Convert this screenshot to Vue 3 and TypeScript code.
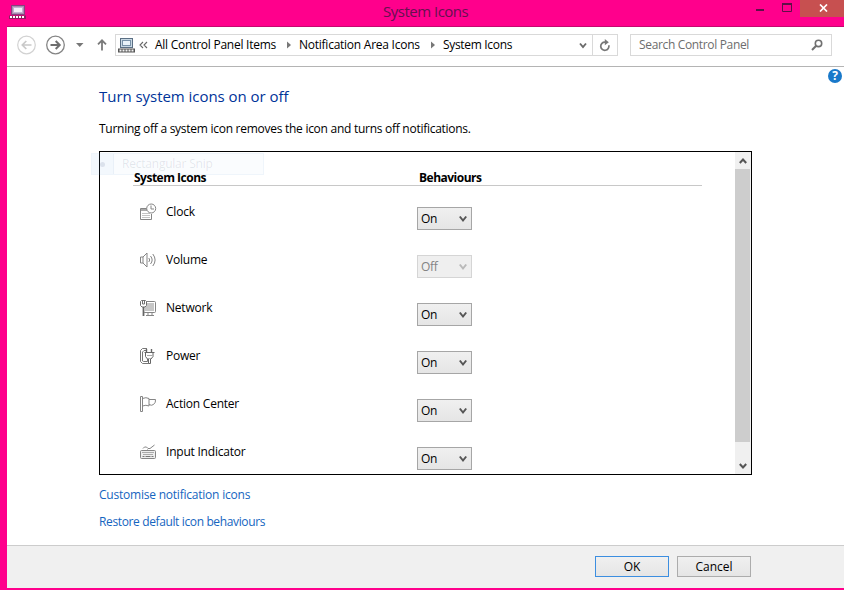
<script setup lang="ts">
import { ref } from 'vue'

type IconName = 'clock' | 'volume' | 'network' | 'power' | 'flag' | 'keyboard'

interface SystemIcon {
  name: string
  icon: IconName
  state: 'On' | 'Off'
  disabled?: boolean
}

const items = ref<SystemIcon[]>([
  { name: 'Clock', icon: 'clock', state: 'On' },
  { name: 'Volume', icon: 'volume', state: 'Off', disabled: true },
  { name: 'Network', icon: 'network', state: 'On' },
  { name: 'Power', icon: 'power', state: 'On' },
  { name: 'Action Center', icon: 'flag', state: 'On' },
  { name: 'Input Indicator', icon: 'keyboard', state: 'On' },
])
</script>

<template>
  <div class="window">
    <header class="titlebar">
      <svg class="app-icon" width="17" height="15" viewBox="0 0 17 15">
        <rect x="2.5" y=".5" width="13" height="9" fill="#a98bb0" stroke="#8a3f80" />
        <rect x="4.5" y="2.5" width="9" height="5" fill="#f4f0f8" stroke="#c3b2d2" />
        <path d="M0 10.500h17v3.500H0z" fill="#8d2060" />
        <path d="M1 12h15" stroke="#fff" stroke-width="2" stroke-dasharray="2 1" />
      </svg>
      <h1 class="title"><span>System Icons</span></h1>
      <div class="controls">
        <svg class="minmax" width="50" height="17" viewBox="0 0 50 17">
          <path d="M6 10h8" stroke="#5e1048" stroke-width="2" />
          <path d="M32.500 3v8.500h9V3" stroke="#5e1048" fill="none" />
          <path d="M32 4h10" stroke="#5e1048" stroke-width="2" />
        </svg>
        <button class="close" aria-label="Close">
          <svg width="9" height="8" viewBox="0 0 9 8"><path d="M1 .5l7 7M8 .5l-7 7" stroke="#fff" stroke-width="1.700" /></svg>
        </button>
      </div>
    </header>

    <nav class="navbar">
      <svg class="nav-icons" width="92" height="22" viewBox="0 0 92 22">
        <g fill="none">
          <circle cx="9.500" cy="11" r="8.800" stroke="#d2d2d2" stroke-width="1.200" />
          <path d="M14.500 11H5.500M9.300 7l-4 4 4 4" stroke="#c9c9c9" stroke-width="1.700" />
          <circle cx="38.500" cy="11" r="8.800" stroke="#858585" stroke-width="1.300" />
          <path d="M33.500 11h9M38.700 7l4 4-4 4" stroke="#6e6e6e" stroke-width="2" />
          <path d="M85 16.500V6.500M81 10.300l4-4 4 4" stroke="#7a7a7a" stroke-width="1.800" />
        </g>
        <path d="M59 9h7.500l-3.750 4z" fill="#777" />
      </svg>
      <div class="address">
        <svg class="path-icon" width="17" height="15" viewBox="0 0 17 15">
          <rect x="2.500" y=".5" width="12" height="9" fill="#c8d8e4" stroke="#5b6f84" />
          <rect x="4.500" y="2.500" width="8" height="5" fill="#e9f3fa" stroke="#7891a8" />
          <path d="M0 10.500h17v4H0z" fill="#555" />
          <path d="M1.500 12.500h14" stroke="#f4f4f4" stroke-width="2" stroke-dasharray="2 1" />
        </svg>
        <svg class="chev2" width="9" height="8" viewBox="0 0 9 8"><path d="M4 1L1 4l3 3M8 1L5 4l3 3" fill="none" stroke="#666" stroke-width="1.100" /></svg>
        <span class="crumb c1">All Control Panel Items</span>
        <svg class="tri" width="4" height="8" viewBox="0 0 4 8"><path d="M0 .5L4 4 0 7.500z" fill="#777" /></svg>
        <span class="crumb c2">Notification Area Icons</span>
        <svg class="tri" width="4" height="8" viewBox="0 0 4 8"><path d="M0 .5L4 4 0 7.500z" fill="#777" /></svg>
        <span class="crumb c3">System Icons</span>
        <svg class="drop" width="8" height="7" viewBox="0 0 8 7"><path d="M1 1.500l3 3.500 3-3.500" fill="none" stroke="#6b6b6b" stroke-width="1.900" /></svg>
        <button class="refresh" aria-label="Refresh">
          <svg width="12" height="13" viewBox="0 0 12 13">
            <path d="M9.800 6.200A4.100 4.100 0 1 1 6 3.100h1" fill="none" stroke="#777" stroke-width="1.700" />
            <path d="M5.800 0l4 3.200-4 3z" fill="#777" />
          </svg>
        </button>
      </div>
      <div class="search">
        <span>Search Control Panel</span>
        <svg width="12" height="12" viewBox="0 0 12 12">
          <circle cx="7.500" cy="4.400" r="3.200" fill="none" stroke="#707070" stroke-width="1.600" />
          <path d="M5.200 6.800L1 11" stroke="#707070" stroke-width="2" />
        </svg>
      </div>
    </nav>

    <main class="content">
      <span class="help">?</span>
      <h2><span>Turn system icons on or off</span></h2>
      <p class="intro"><span>Turning off a system icon removes the icon and turns off notifications.</span></p>

      <section class="listbox">
        <div class="list">
          <div class="head">
            <span class="h-name">System Icons</span>
            <span class="h-beh">Behaviours</span>
          </div>
          <div v-for="item in items" :key="item.name" class="row">
            <svg class="glyph" width="18" height="18" viewBox="0 0 18 18" fill="none" stroke="#858585">
              <template v-if="item.icon === 'clock'">
                <path d="M9 5.500H1.500v11h11V11" />
                <path d="M2 7h6" stroke="#aaa" stroke-width="2" />
                <path d="M3.500 10.500h8M3.500 12.500h8M3.500 14.500h8" stroke="#888" stroke-dasharray="1 1" />
                <circle cx="12.200" cy="5.500" r="4.500" fill="#fff" />
                <path d="M12 2.500v3.500h3" />
              </template>
              <template v-else-if="item.icon === 'volume'">
                <path d="M1.500 6v6h2.500l4 4V2L4 6zM4 6v6" />
                <path d="M9.800 7q1.800 2 0 4M11.500 5q3.300 4 0 8M13.800 3q4.600 6 0 12" />
              </template>
              <template v-else-if="item.icon === 'network'">
                <rect x="4.500" y="2.500" width="12" height="11" rx="1" fill="#fff" />
                <rect x="6" y="4" width="9" height="8" fill="#c6c6c6" stroke="none" />
                <path d="M7 16.500h8M9 14v2M13 14v2" />
                <path d="M1.500 2.500l1-1h4l1 1v4l-1.500 1.500H3L1.500 6.500z" fill="#fff" stroke="#707070" />
                <path d="M3.500 2v3h2V2" stroke="#707070" />
                <path d="M4.500 8v9" stroke="#666" stroke-width="1.800" />
              </template>
              <template v-else-if="item.icon === 'power'">
                <path d="M8 1.500H3.500l-2 2v11l2 2H9.500l1-1M8 3.500H5L3.500 5v9l1 .5h4V12" stroke="#777" />
                <path d="M7.500 2v4M12.500 2v4" stroke="#666" stroke-width="1.400" />
                <path d="M5.500 5.500h10M6.500 6v3.500l2 2.500h3.500l2-2.500V6" fill="#fff" stroke="#666" />
                <path d="M9.500 12v4.500h2V12" fill="#fff" stroke="#666" />
                <path d="M8 8.500h5" stroke="#aaa" />
              </template>
              <template v-else-if="item.icon === 'flag'">
                <path d="M1.500 1.500h2v15h-2z" />
                <path d="M3.500 3.500q3.500-1.600 6.500 0v7.500q-3-1.500-6.500 0M10 4.500h6.500q.5 3-2 5-2 1.500-4.500 0" />
              </template>
              <template v-else>
                <path d="M4 5.500l1.500-1.500h2L9 5.500h2L15.500 2M8.500 6.500v1" />
                <rect x="1.500" y="7.500" width="15" height="8" rx="1" fill="#eee" />
                <path d="M3.500 9.500h11M4.500 11.500h10" stroke="#666" stroke-dasharray="1 1" />
                <path d="M3.500 13.500h2M6.500 13.500h5M12.500 13.500h2" stroke="#777" />
              </template>
            </svg>
            <span class="label">{{ item.name }}</span>
            <button class="select" :class="{ off: item.disabled }" :disabled="item.disabled">
              <span>{{ item.state }}</span>
              <svg width="8" height="8" viewBox="0 0 8 8"><path d="M.8 1.500L4 5.500l3.200-4" fill="none" stroke="currentColor" stroke-width="2" /></svg>
            </button>
          </div>
        </div>
        <div class="scrollbar">
          <svg class="arrow" width="8" height="6" viewBox="0 0 8 6"><path d="M.8 5L4 1.500 7.200 5" fill="none" stroke="#555" stroke-width="2" /></svg>
          <div class="thumb"></div>
          <svg class="arrow down" width="8" height="6" viewBox="0 0 8 6"><path d="M.8 1L4 4.500 7.200 1" fill="none" stroke="#555" stroke-width="2" /></svg>
        </div>
        <div class="ghost"><i><b></b></i><span>Rectangular Snip</span></div>
      </section>

      <a class="link l1"><span>Customise notification icons</span></a>
      <a class="link l2"><span>Restore default icon behaviours</span></a>
    </main>

    <footer class="footer">
      <button class="btn primary">OK</button>
      <button class="btn">Cancel</button>
    </footer>
  </div>
</template>

<style>
body {
  margin: 0;
  overflow: hidden;
}
</style>

<style scoped>
* {
  box-sizing: border-box;
}
.window {
  width: 844px;
  height: 590px;
  padding: 0 0 2px 7px;
  background: #ff008c;
  display: flex;
  flex-direction: column;
  font: 12px/16px 'Open Sans', 'Noto Sans', sans-serif;
  color: #000;
  white-space: nowrap;
}
h1, h2, p {
  margin: 0;
  font-weight: 400;
}
button {
  font: inherit;
  color: inherit;
  padding: 0;
  margin: 0;
  border: 0;
  border-radius: 0;
}
svg {
  display: block;
  flex: none;
}
.titlebar {
  height: 27px;
  display: flex;
  flex: none;
  border-bottom: 1px solid #c4086f;
}
.app-icon {
  margin: 5px 0 0 2px;
}
.title {
  flex: 1;
  padding-left: 357px;
  font-size: 15px;
  line-height: 23px;
  letter-spacing: -0.5px;
  color: #66104f;
}
.controls {
  display: flex;
}
.close {
  width: 44px;
  height: 17px;
  padding-right: 0;
  background: #c75050;
  display: flex;
  justify-content: center;
  align-items: center;
}
.close svg {
  margin: -2px 0 0 2px;
}
.navbar {
  height: 40px;
  flex: none;
  background: #fff;
  border-bottom: 1px solid #b4b4b4;
  display: flex;
  padding: 7px 12px 0 10px;
}
.address {
  width: 503px;
  height: 22px;
  margin-left: 6px;
  border: 1px solid #d9d9d9;
  display: flex;
  align-items: center;
}
.path-icon {
  margin-left: 2px;
}
.chev2 {
  margin: 0 7px 0 4px;
}
.crumb {
  letter-spacing: -0.25px;
}
.c1,
.c2 {
  width: 132px;
}
.c3 {
  letter-spacing: -0.32px;
}
.tri {
  margin-right: 8px;
}
.drop {
  margin-left: auto;
  margin-right: 5px;
}
.refresh {
  width: 25px;
  height: 20px;
  border-left: 1px solid #d9d9d9;
  background: #fff;
  display: flex;
  justify-content: center;
  align-items: center;
}
.search {
  width: 202px;
  height: 22px;
  margin-left: 12px;
  border: 1px solid #d9d9d9;
  display: flex;
  align-items: center;
  justify-content: space-between;
  padding: 0 8px;
  color: #6d6d6d;
  letter-spacing: -0.34px;
}
.content {
  flex: 1;
  background: #fff;
  position: relative;
  padding: 19px 0 0 92px;
}
.help {
  position: absolute;
  top: 2px;
  right: 2px;
  width: 14px;
  height: 14px;
  border-radius: 50%;
  background: #1979ca;
  color: #fff;
  font-weight: 700;
  font-size: 12px;
  line-height: 14px;
  text-align: center;
}
h2 {
  font-size: 15px;
  line-height: 20px;
  letter-spacing: -0.04px;
  color: #003399;
}
.intro {
  margin-top: 15px;
  letter-spacing: -0.27px;
}
.listbox {
  position: relative;
  width: 653px;
  height: 324px;
  margin-top: 14px;
  border: 1px solid #000;
  display: flex;
}
.list {
  flex: 1;
  overflow: hidden;
  padding: 0 33px 0 33px;
}
.head {
  height: 34px;
  margin-bottom: 2px;
  padding-top: 20px;
  border-bottom: 1px solid #c8c8c8;
  display: flex;
  font-weight: 700;
  line-height: 12px;
  letter-spacing: -0.5px;
}
.h-name {
  width: 286px;
  padding-left: 1px;
}
.row {
  height: 48px;
  display: flex;
  align-items: flex-start;
}
.glyph {
  margin: 15px 9px 0 6px;
}
.label {
  width: 251px;
  margin-top: 16px;
  letter-spacing: -0.22px;
}
.select {
  width: 55px;
  height: 23px;
  margin-top: 19px;
  padding: 0 4px 0 3px;
  border: 1px solid #a6a6a6;
  background: linear-gradient(#f0f0f0, #e5e5e5);
  letter-spacing: -0.3px;
  display: flex;
  align-items: center;
  justify-content: space-between;
}
.select svg {
  color: #555;
}
.select.off {
  border-color: #d5d5d5;
  background: #efefef;
  color: #838383;
}
.select.off svg {
  color: #b9b9b9;
}
.scrollbar {
  width: 16px;
  background: #f0f0f0;
  display: flex;
  flex-direction: column;
  align-items: center;
}
.arrow {
  margin: 6px 0 5px;
}
.arrow.down {
  margin: auto 0 5px;
}
.thumb {
  width: 15px;
  height: 273px;
  margin-right: 1px;
  background: #cdcdcd;
}
.ghost {
  position: absolute;
  left: -9px;
  top: 1px;
  width: 173px;
  height: 22px;
  border: 1px solid rgba(120, 165, 215, 0.08);
  background: rgba(140, 180, 230, 0.04);
  display: flex;
  align-items: center;
  line-height: 12px;
  letter-spacing: -0.22px;
  color: rgba(60, 80, 110, 0.13);
}
.ghost i {
  width: 22px;
  height: 20px;
  margin-right: 8px;
  background: rgba(140, 180, 230, 0.06);
  border-right: 1px solid rgba(120, 150, 190, 0.08);
  display: flex;
  align-items: center;
  justify-content: center;
}
.ghost b {
  width: 5px;
  height: 5px;
  border-radius: 50%;
  background: rgba(60, 80, 120, 0.13);
}
.link {
  display: block;
  color: #1565c0;
}
.l1 {
  margin-top: 12px;
  letter-spacing: -0.22px;
}
.l2 {
  margin-top: 11px;
  letter-spacing: -0.37px;
}
.footer {
  height: 43px;
  flex: none;
  background: #f0f0f0;
  border-top: 1px solid #cccccc;
  display: flex;
  justify-content: flex-end;
  gap: 8px;
  padding: 10px 93px 0 0;
}
.btn {
  width: 74px;
  height: 21px;
  border: 1px solid #acacac;
  background: linear-gradient(#f0f0f0, #e5e5e5);
  line-height: 19px;
}
.btn.primary {
  border-color: #3c8ee0;
}
</style>
